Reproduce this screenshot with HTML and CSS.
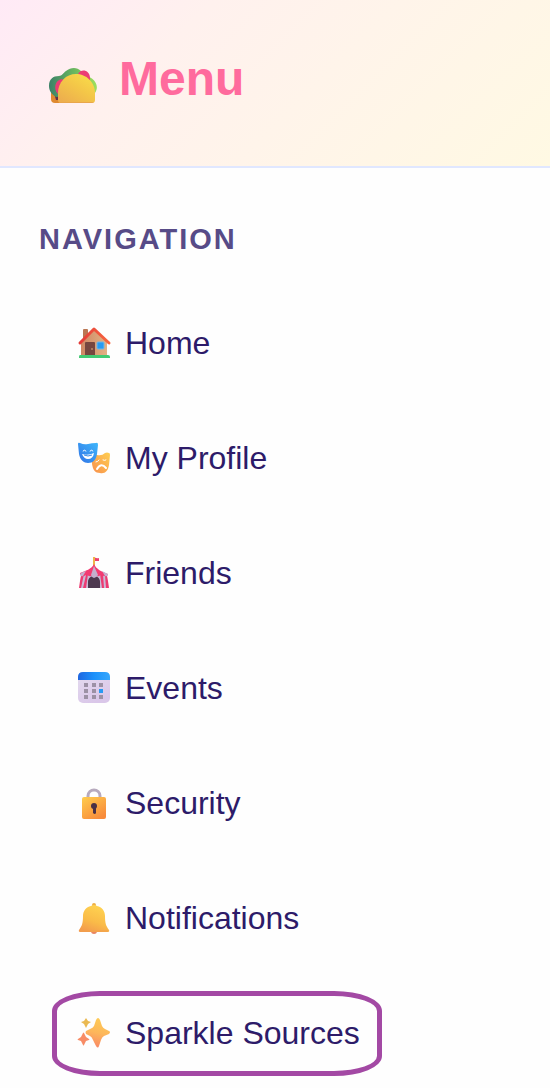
FILE: index.html
```html
<!DOCTYPE html>
<html lang="en">
<head>
    <meta charset="UTF-8">
    <meta name="viewport" content="width=device-width, initial-scale=1.0">
    <title>Menu</title>
    <link rel="stylesheet" href="styles.css">
</head>
<body>
    <header class="menu-header">
        <svg class="logo" viewBox="0 0 48 40" aria-hidden="true">
            <defs>
                <linearGradient id="leaf"><stop offset="0" stop-color="#3b8168"/><stop offset="0.5" stop-color="#68b45f"/><stop offset="1" stop-color="#9fe05c"/></linearGradient>
                <linearGradient id="shell" x1="1" y1="0" x2="0.2" y2="1"><stop offset="0" stop-color="#f9e04a"/><stop offset="0.5" stop-color="#f4c748"/><stop offset="1" stop-color="#edae4e"/></linearGradient>
            </defs>
            <path fill="#df8930" d="M2 23h12v13H6q-4 0-4-4z"/>
            <path fill="#653047" d="M5 26h7v7H7z"/>
            <path fill="url(#leaf)" d="M7 30C2 27 0 23 0 19c0-7 4-10 10-10 3 0 4-3 7-5 5-4 11-4 15 0l10 7c5 3 8 9 4 15z"/>
            <path fill="#eb3b74" d="M9 27c-5-5-3-14 4-15l6 5-9 13zM29 7c3-6 12-4 12 4v6z"/>
            <path fill="url(#shell)" d="M9 26c0-11 8-19 18-19s19 8 19 19v7q0 3-3 3H12q-3 0-3-3z"/>
            <path fill="#e9a64b" d="M10 35h35q-1 1-3 1H13q-2 0-3-1z"/>
        </svg>
        <h1>Menu</h1>
    </header>

    <nav class="menu-nav" aria-labelledby="nav-title">
        <h2 id="nav-title">NAVIGATION</h2>
        <ul>
            <li>
                <a href="#home">
                    <svg viewBox="0 0 32 32" aria-hidden="true">
                        <defs>
                            <linearGradient id="wall"><stop offset="0" stop-color="#ce8763"/><stop offset="1" stop-color="#e2b184"/></linearGradient>
                            <linearGradient id="roof"><stop offset="0" stop-color="#e33a37"/><stop offset="1" stop-color="#f76740"/></linearGradient>
                        </defs>
                        <path fill="#ba7652" d="M5 3q0-1 1-1h3q1 0 1 1v12H5z"/>
                        <path fill="url(#wall)" d="M3 15 16 3l13 12v14H3z"/>
                        <path fill="none" stroke="url(#roof)" stroke-width="3" stroke-linecap="round" stroke-linejoin="round" d="M2 16 16 2l15 14"/>
                        <rect x="7" y="15" width="10" height="14" rx="1" fill="#76463f"/>
                        <circle cx="14" cy="22" r="1" fill="#bb8b67"/>
                        <rect x="19" y="15" width="7" height="7" rx="1" fill="#299bf2" stroke="#70b8e8"/>
                        <path fill="#43ca73" d="M2 28h28q2 0 2 2v1H1v-1q0-2 1-2z"/>
                    </svg>
                    <span>Home</span>
                </a>
            </li>
            <li>
                <a href="#profile">
                    <svg viewBox="0 0 32 32" aria-hidden="true">
                        <defs>
                            <linearGradient id="happy" x1="1" y1="0" x2="0" y2="1"><stop offset="0" stop-color="#3eb7fb"/><stop offset="1" stop-color="#3173e5"/></linearGradient>
                            <linearGradient id="sad" x1="1" y1="0" x2="0" y2="1"><stop offset="0" stop-color="#ffcf51"/><stop offset="1" stop-color="#f8904d"/></linearGradient>
                        </defs>
                        <path fill="url(#sad)" d="M14 14q2-2 5-1 5 1 8-2 2-1 4 0 1 0 1 2l-1 10c-1 6-4 9-9 8-5 0-7-3-8-9z"/>
                        <path fill="url(#happy)" d="M0 2q0-2 2-1 4 2 8 1t8-1q2-1 2 2l-1 9c-1 6-4 9-9 9-4 0-8-3-9-9z"/>
                        <g fill="none" stroke="#fff" stroke-linecap="round">
                            <path d="M5 9q1-2 3 0M12 9q2-2 3 0M18 20q2 0 3-2M25 18q2 1 3 0"/>
                            <path stroke-width="2" d="M19 27q4-7 9-1"/>
                        </g>
                        <path fill="#fff" d="M4 12q6 2 12-1-1 6-6 6-4 0-6-5z"/>
                        <path fill="none" stroke="#348bec" d="M6 13q4 2 8 0"/>
                    </svg>
                    <span>My Profile</span>
                </a>
            </li>
            <li>
                <a href="#friends">
                    <svg viewBox="0 0 32 32" aria-hidden="true">
                        <path fill="#ef3f6d" d="M16 0q3 2 5 1v3h-5z"/>
                        <path stroke="#eeb44b" stroke-width="2" d="M16 0v9"/>
                        <path fill="#ec3b72" d="M4 16h24c2 5 2 9 3 15H1C2 25 2 21 4 16z"/>
                        <path fill="#c9b9d6" d="m6 17 2 1-3 13H3zM10 17h12l2 14H8zM25 17l2 1 1 13h-2z"/>
                        <path fill="#4d394f" d="M10 31v-6c0-8 12-8 12 0v6z"/>
                        <path fill="#f33b72" d="M16 7C14 12 7 14 2 16c0 4 5 4 7 1 1 3 5 3 7 0 2 3 6 3 7 0 2 3 7 3 7 0-6-2-12-5-14-10z"/>
                        <path fill="#c4b0ce" d="M8 14q-4 1-6 3 0 3 3 2zM24 14l6 3q0 3-3 2zM16 9l-3 9q1 3 3 3t4-3z"/>
                    </svg>
                    <span>Friends</span>
                </a>
            </li>
            <li>
                <a href="#events">
                    <svg viewBox="0 0 32 32" aria-hidden="true">
                        <defs>
                            <linearGradient id="page" x1="0" y1="0" x2="0.5" y2="1"><stop offset="0" stop-color="#e4dcef"/><stop offset="1" stop-color="#dac7e9"/></linearGradient>
                            <linearGradient id="top"><stop offset="0" stop-color="#1f66e0"/><stop offset="0.5" stop-color="#1c91fb"/><stop offset="1" stop-color="#36a7fc"/></linearGradient>
                        </defs>
                        <rect y="1" width="32" height="30" rx="5" fill="url(#page)"/>
                        <path fill="url(#top)" d="M0 8V5q0-5 5-5h22q5 0 5 5v3z"/>
                        <path fill="#9c91a5" d="M6 11h4v4H6zM14 11h4v4h-4zM21 11h4v4h-4zM6 17h4v4H6zM14 17h4v4h-4zM6 23h4v4H6zM14 23h4v4h-4zM21 23h4v4h-4z"/>
                        <path fill="#289af3" d="M21 17h4v4h-4z"/>
                    </svg>
                    <span>Events</span>
                </a>
            </li>
            <li>
                <a href="#security">
                    <svg viewBox="0 0 32 32" aria-hidden="true">
                        <defs>
                            <linearGradient id="lock" x1="0" y1="0" x2="0.7" y2="1"><stop offset="0" stop-color="#ffcd4d"/><stop offset="1" stop-color="#f88b3b"/></linearGradient>
                        </defs>
                        <path fill="none" stroke="#b7aabe" stroke-width="3" d="M10 13V9c0-8 12-8 12 0v4"/>
                        <rect x="4" y="10" width="24" height="22" rx="2" fill="url(#lock)"/>
                        <circle cx="16" cy="19" r="3" fill="#493046"/>
                        <path fill="#493046" d="M15 19h3v7q-1 2-3 0z"/>
                    </svg>
                    <span>Security</span>
                </a>
            </li>
            <li>
                <a href="#notifications">
                    <svg viewBox="0 0 32 32" aria-hidden="true">
                        <defs>
                            <linearGradient id="bell" x1="0.7" y1="0" x2="0.3" y2="1"><stop offset="0" stop-color="#ffd451"/><stop offset="0.6" stop-color="#fabb48"/><stop offset="1" stop-color="#f39b4d"/></linearGradient>
                        </defs>
                        <circle cx="16" cy="29" r="3" fill="#e88562"/>
                        <circle cx="16" cy="3" r="2" fill="#efb044"/>
                        <path fill="url(#bell)" d="M13 4q3-2 6 0c5 1 8 5 8 10 0 7 1 10 4 14q1 2-2 2H3q-3 0-2-2c3-4 4-7 4-14 0-5 3-9 8-10z"/>
                        <path fill="none" stroke="#f1a04d" d="M2 29h28"/>
                    </svg>
                    <span>Notifications</span>
                </a>
            </li>
            <li>
                <a class="active" href="#sparkle-sources" aria-current="page">
                    <svg viewBox="0 0 32 32" aria-hidden="true">
                        <defs>
                            <linearGradient id="spark" x1="0.6" y1="0" x2="0.4" y2="1"><stop offset="0" stop-color="#fecb55"/><stop offset="0.5" stop-color="#fdb75b"/><stop offset="1" stop-color="#f98866"/></linearGradient>
                        </defs>
                        <path fill="url(#spark)" d="M18 3q2-4 4 0l2 6q1 2 3 3l4 2q2 1 0 3l-5 2q-2 1-3 4l-2 6q-1 3-3 0l-3-6q-1-3-3-4l-4-2q-1-2 0-3l4-2q3-1 4-3z"/>
                        <path fill="#eab951" d="m8 1 2 3 3 1-3 2-2 4-2-4-3-2 3-1z"/>
                        <path fill="#f88c66" d="M5 16q1-1 1 0l2 4 3 2q1 1 0 1l-3 1-2 4q-1 1-1 0l-2-4-3-1q-1-1 0-1l3-2z"/>
                    </svg>
                    <span>Sparkle Sources</span>
                </a>
            </li>
        </ul>
    </nav>
</body>
</html>
```
FILE: styles.css
```css
body {
    font-family: "Liberation Sans", Arial, sans-serif;
    margin: 0;
    background-color: #fefefe;
    color: #2d1b69;
}
.menu-header {
    display: flex;
    align-items: flex-end;
    gap: 22px;
    padding: 51px 49px 59px;
    background: linear-gradient(135deg, #ffeaf6 0%, #fff1ee 30%, #fff9e3 100%);
    border-bottom: 2px solid #e0e7ff;
}
.logo {
    width: 48px;
    height: 40px;
}
h1 {
    margin: 0;
    font-size: 48px;
    line-height: 56px;
    color: #ff6b9d;
}
.menu-nav {
    padding: 54px 39px 12px;
}
h2 {
    margin: 0 0 45px;
    font-size: 29px;
    line-height: 34px;
    letter-spacing: 2px;
    color: #574b87;
}
ul {
    display: flex;
    flex-direction: column;
    align-items: flex-start;
    gap: 30px;
    margin: 0;
    padding: 0 0 0 13px;
    list-style: none;
}
a {
    display: flex;
    align-items: center;
    gap: 15px;
    box-sizing: border-box;
    height: 85px;
    padding: 0 17px 0 21px;
    border: 5px solid transparent;
    border-radius: 48px / 20px;
    font-size: 32px;
    color: #2d1b69;
    text-decoration: none;
}
a svg {
    width: 32px;
    height: 32px;
    margin-bottom: 2px;
    overflow: visible;
}
a.active {
    border-color: #a349a4;
}
```
